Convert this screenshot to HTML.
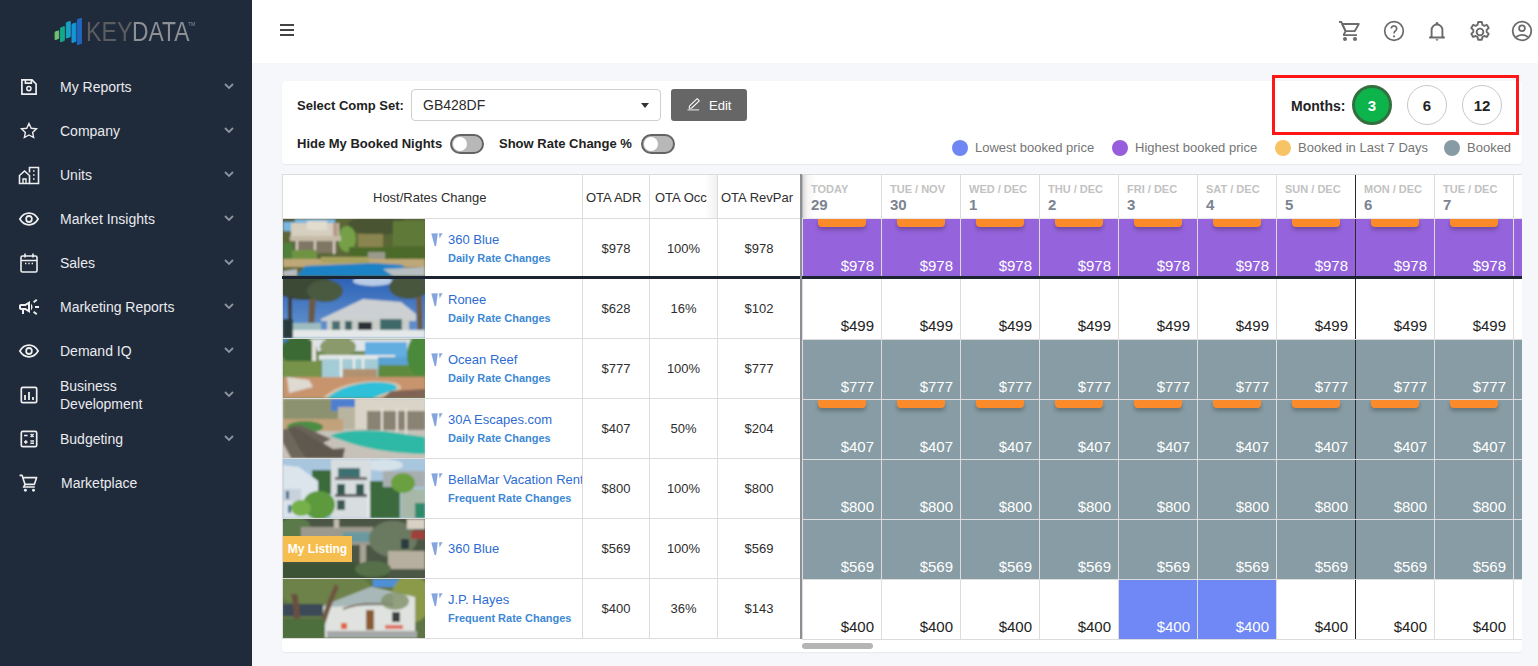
<!DOCTYPE html><html><head><meta charset="utf-8"><style>
*{box-sizing:border-box;margin:0;padding:0}
html,body{width:1538px;height:666px;overflow:hidden;background:#f5f7fa;font-family:"Liberation Sans",sans-serif;position:relative}
.abs{position:absolute}
#side{position:absolute;left:0;top:0;width:252px;height:666px;background:#1f2a3b}
.nav{position:absolute;left:0;width:252px;color:#e9ebee;font-size:14px}
.nav .t{position:absolute;left:60px;white-space:nowrap;line-height:18px}
.nav svg.ic{position:absolute;left:18px}
.nav .chev{position:absolute;left:224px}
#hdr{position:absolute;left:252px;top:0;width:1286px;height:63px;background:#fff}
.card{position:absolute;background:#fff;border-radius:4px;box-shadow:0 1px 2px rgba(0,0,0,0.06)}
.lbl{position:absolute;font-weight:bold;font-size:13px;color:#222;white-space:nowrap;line-height:15px}
.tog{position:absolute;width:34px;height:20px;border:2px solid #636363;border-radius:10px;background:#b8b8b8}
.tog:after{content:"";position:absolute;left:1px;top:1px;width:14px;height:14px;border-radius:50%;background:#fff}
.leg{position:absolute;top:140px;font-size:13px;color:#757575;line-height:16px;white-space:nowrap}
.dot{position:absolute;top:140px;width:16px;height:16px;border-radius:50%}
.mc{position:absolute;top:85px;width:40px;height:40px;border-radius:50%;border:1px solid #c8c8c8;text-align:center;line-height:40px;font-weight:bold;font-size:15px;color:#222}
/* table */
.hl{position:absolute;background:#dcdcdc}
.tx{position:absolute;white-space:nowrap;font-size:13px;color:#2e2e2e;line-height:15px}
.name{position:absolute;left:448px;font-size:13px;color:#2d6cd2;white-space:nowrap;line-height:15px}
.sub{position:absolute;left:448px;font-size:11px;font-weight:bold;color:#3c88d5;white-space:nowrap;line-height:13px}
.vr{position:absolute;left:431px}
.dh1{position:absolute;font-size:11px;font-weight:bold;color:#c2c2c2;white-space:nowrap;line-height:13px}
.dh2{position:absolute;font-size:15px;font-weight:bold;color:#7b8490;white-space:nowrap;line-height:17px}
.cell{position:absolute;width:79px}
.pr{position:absolute;right:7px;font-size:15px;line-height:17px;white-space:nowrap}
.tab{position:absolute;left:15px;top:0;width:48px;height:8px;background:#fb8a2b;border-radius:0 0 4px 4px;box-shadow:0 3px 4px rgba(0,0,0,0.25)}
</style></head><body><div id="side">
<svg class="abs" style="left:50px;top:15px" width="36" height="34" viewBox="0 0 36 34"><path d="M5.1 17.1 L8.7 15.8 L8.7 23.4 L5.1 24.7Z" fill="#6cc173" stroke="#6cc173" stroke-width="1" stroke-linejoin="round"/><path d="M10.6 12.9 L14.3 11.6 L14.3 25.5 L10.6 26.8Z" fill="#13a88b" stroke="#13a88b" stroke-width="1" stroke-linejoin="round"/><path d="M16.3 7.7 L20.2 6.4 L20.2 21.8 L16.3 23.1Z" fill="#17a2c6" stroke="#17a2c6" stroke-width="1" stroke-linejoin="round"/><path d="M22.0 9.3 L25.9 8.0 L25.9 26.3 L22.0 27.6Z" fill="#1595d8" stroke="#1595d8" stroke-width="1" stroke-linejoin="round"/><path d="M27.4 4.6 L31.4 3.3 L31.4 28.4 L27.4 29.7Z" fill="#1f66c1" stroke="#1f66c1" stroke-width="1" stroke-linejoin="round"/></svg>
<div class="abs" style="left:86px;top:17px;font-size:27px;line-height:30px;white-space:nowrap;color:#5b5d61;transform:scaleX(0.86);transform-origin:0 0">KEY</div>
<div class="abs" style="left:132px;top:17px;font-size:27px;line-height:30px;white-space:nowrap;color:#8d9094;transform:scaleX(0.846);transform-origin:0 0">DATA</div>
<div class="abs" style="left:188px;top:21px;font-size:5px;line-height:6px;color:#8d9094">TM</div>
<div class="nav" style="top:78px;height:18px"><div class="t" style="top:0;left:60px">My Reports</div></div>
<svg class="abs" style="left:17px;top:75px" width="24" height="24" viewBox="0 0 24 24"><path d="M4.9 4.9h10.1l4.1 4.1v10.1H4.9z" fill="none" stroke="#eee" stroke-width="1.7"/><path d="M8.4 4.9v3.2h6V4.9" fill="none" stroke="#eee" stroke-width="1.6"/><circle cx="11.9" cy="13.6" r="2.1" fill="none" stroke="#eee" stroke-width="1.5"/></svg>
<svg class="abs" style="left:224px;top:83px" width="10" height="7" viewBox="0 0 10 7"><path d="M1 1l4 4 4-4" fill="none" stroke="#8d949d" stroke-width="1.8"/></svg>
<div class="nav" style="top:122px;height:18px"><div class="t" style="top:0;left:60px">Company</div></div>
<svg class="abs" style="left:17px;top:119px" width="24" height="24" viewBox="0 0 24 24"><path transform="translate(12 12) scale(0.86) translate(-12 -12)" d="M12 3.2l2.6 5.6 6.1.7-4.5 4.1 1.2 6-5.4-3-5.4 3 1.2-6-4.5-4.1 6.1-.7z" fill="none" stroke="#eee" stroke-width="1.6" stroke-linejoin="miter"/></svg>
<svg class="abs" style="left:224px;top:127px" width="10" height="7" viewBox="0 0 10 7"><path d="M1 1l4 4 4-4" fill="none" stroke="#8d949d" stroke-width="1.8"/></svg>
<div class="nav" style="top:166px;height:18px"><div class="t" style="top:0;left:60px">Units</div></div>
<svg class="abs" style="left:17px;top:163px" width="24" height="24" viewBox="0 0 24 24"><path d="M2.5 20.5v-8l5-4.5 5 4.5v8z" fill="none" stroke="#eee" stroke-width="1.6"/><path d="M6 20.5v-4.5h3v4.5" fill="none" stroke="#eee" stroke-width="1.4"/><path d="M12.5 9.5V4.5h9v16h-9" fill="none" stroke="#eee" stroke-width="1.6"/><path d="M16 8h1.6M16 12h1.6M16 16h1.6" stroke="#eee" stroke-width="1.6"/></svg>
<svg class="abs" style="left:224px;top:171px" width="10" height="7" viewBox="0 0 10 7"><path d="M1 1l4 4 4-4" fill="none" stroke="#8d949d" stroke-width="1.8"/></svg>
<div class="nav" style="top:210px;height:18px"><div class="t" style="top:0;left:60px">Market Insights</div></div>
<svg class="abs" style="left:17px;top:207px" width="24" height="24" viewBox="0 0 24 24"><g transform="translate(12 12) scale(0.87 0.92) translate(-12 -12)"><path d="M1.5 12c2.6-4.2 6.2-6.3 10.5-6.3s7.9 2.1 10.5 6.3c-2.6 4.2-6.2 6.3-10.5 6.3S4.1 16.2 1.5 12z" fill="none" stroke="#eee" stroke-width="2"/><circle cx="12" cy="12" r="3.3" fill="none" stroke="#eee" stroke-width="2"/></g></svg>
<svg class="abs" style="left:224px;top:215px" width="10" height="7" viewBox="0 0 10 7"><path d="M1 1l4 4 4-4" fill="none" stroke="#8d949d" stroke-width="1.8"/></svg>
<div class="nav" style="top:254px;height:18px"><div class="t" style="top:0;left:60px">Sales</div></div>
<svg class="abs" style="left:17px;top:251px" width="24" height="24" viewBox="0 0 24 24"><rect x="4" y="5" width="16" height="16" rx="1.5" fill="none" stroke="#eee" stroke-width="1.6"/><path d="M8 2.5v4M16 2.5v4M4 9.5h16" stroke="#eee" stroke-width="1.6"/><path d="M8 12.5h1.4M11.3 12.5h1.4M14.6 12.5h1.4" stroke="#eee" stroke-width="1.6"/></svg>
<svg class="abs" style="left:224px;top:259px" width="10" height="7" viewBox="0 0 10 7"><path d="M1 1l4 4 4-4" fill="none" stroke="#8d949d" stroke-width="1.8"/></svg>
<div class="nav" style="top:298px;height:18px"><div class="t" style="top:0;left:60px">Marketing Reports</div></div>
<svg class="abs" style="left:17px;top:295px" width="24" height="24" viewBox="0 0 24 24"><path fill="#eee" d="M18 11v2h4v-2h-4zm-2 6.61c.96.71 2.21 1.65 3.2 2.39.4-.53.8-1.07 1.2-1.6-.99-.74-2.24-1.68-3.2-2.4-.4.54-.8 1.08-1.2 1.61zM20.4 5.6c-.4-.53-.8-1.070-1.2-1.6-.99.74-2.24 1.68-3.2 2.4.4.53.8 1.07 1.2 1.6.96-.72 2.21-1.65 3.2-2.4zM4 9c-1.1 0-2 .9-2 2v2c0 1.1.9 2 2 2h1v4h2v-4h1l5 3V6L8 9H4zm5.03 1.71L11 9.53v4.94l-1.97-1.18-.48-.29H4v-2h4.55l.48-.29zM15.5 12c0-1.330-.58-2.53-1.5-3.35v6.69c.92-.81 1.5-2.01 1.5-3.34z"/></svg>
<svg class="abs" style="left:224px;top:303px" width="10" height="7" viewBox="0 0 10 7"><path d="M1 1l4 4 4-4" fill="none" stroke="#8d949d" stroke-width="1.8"/></svg>
<div class="nav" style="top:342px;height:18px"><div class="t" style="top:0;left:60px">Demand IQ</div></div>
<svg class="abs" style="left:17px;top:339px" width="24" height="24" viewBox="0 0 24 24"><g transform="translate(12 12) scale(0.87 0.92) translate(-12 -12)"><path d="M1.5 12c2.6-4.2 6.2-6.3 10.5-6.3s7.9 2.1 10.5 6.3c-2.6 4.2-6.2 6.3-10.5 6.3S4.1 16.2 1.5 12z" fill="none" stroke="#eee" stroke-width="2"/><circle cx="12" cy="12" r="3.3" fill="none" stroke="#eee" stroke-width="2"/></g></svg>
<svg class="abs" style="left:224px;top:347px" width="10" height="7" viewBox="0 0 10 7"><path d="M1 1l4 4 4-4" fill="none" stroke="#8d949d" stroke-width="1.8"/></svg>
<div class="nav" style="top:377px;height:36px"><div class="t" style="top:0;left:60px">Business<br>Development</div></div>
<svg class="abs" style="left:17px;top:383px" width="24" height="24" viewBox="0 0 24 24"><rect x="4.3" y="4.3" width="15.4" height="15.4" rx="1.5" fill="none" stroke="#eee" stroke-width="1.7"/><path d="M8 17v-5M12 17v-8M16 17v-3" stroke="#eee" stroke-width="1.8"/></svg>
<svg class="abs" style="left:224px;top:391px" width="10" height="7" viewBox="0 0 10 7"><path d="M1 1l4 4 4-4" fill="none" stroke="#8d949d" stroke-width="1.8"/></svg>
<div class="nav" style="top:430px;height:18px"><div class="t" style="top:0;left:60px">Budgeting</div></div>
<svg class="abs" style="left:17px;top:427px" width="24" height="24" viewBox="0 0 24 24"><rect x="4.3" y="4.3" width="15.4" height="15.4" rx="1.5" fill="none" stroke="#eee" stroke-width="1.7"/><path d="M7 8.5h3.6M7 15h3.6M8.8 13.2v3.6M13.4 14h3.6M13.4 16.3h3.6M13.6 7l3 3M16.6 7l-3 3" stroke="#eee" stroke-width="1.6"/></svg>
<svg class="abs" style="left:224px;top:435px" width="10" height="7" viewBox="0 0 10 7"><path d="M1 1l4 4 4-4" fill="none" stroke="#8d949d" stroke-width="1.8"/></svg>
<div class="nav" style="top:474px;height:18px"><div class="t" style="top:0;left:61px">Marketplace</div></div>
<svg class="abs" style="left:17px;top:471px" width="24" height="24" viewBox="0 0 24 24"><g transform="translate(12 12) scale(0.9) translate(-12 -12)"><path d="M1.5 3.5h2.8l3.2 10h10.5l2.5-7.5H6" fill="none" stroke="#eee" stroke-width="1.8" stroke-linejoin="round"/><path d="M7.5 13.5l-1.3 3h12.3" fill="none" stroke="#eee" stroke-width="1.8"/><circle cx="8" cy="20" r="1.6" fill="#eee"/><circle cx="17" cy="20" r="1.6" fill="#eee"/></g></svg>
</div>
<div id="hdr">
<svg class="abs" style="left:27px;top:22px" width="16" height="16" viewBox="0 0 16 16"><path d="M1 3h14M1 8h14M1 13h14" stroke="#444" stroke-width="2"/></svg>
<svg class="abs" style="left:1086px;top:19px" width="24" height="24" viewBox="0 0 24 24"><path d="M1 3h2.3l1 2M4.2 5h16.6l-4.1 7.2H7.6z" fill="none" stroke="#6b6b6b" stroke-width="1.8" stroke-linejoin="round"/><path d="M4.2 5l3.4 7.2-1.8 3.3c-.2.4 0 .7.4.7H19" fill="none" stroke="#6b6b6b" stroke-width="1.8" stroke-linejoin="round"/><circle cx="7" cy="20.1" r="2" fill="#6b6b6b"/><circle cx="17" cy="20.1" r="2" fill="#6b6b6b"/></svg>
<svg class="abs" style="left:1130px;top:19px" width="24" height="24" viewBox="0 0 24 24"><circle cx="12" cy="12" r="9.3" fill="none" stroke="#6b6b6b" stroke-width="1.7"/><path d="M9.3 9.6a2.7 2.7 0 1 1 4.2 2.2c-1 .7-1.5 1.2-1.5 2.6" fill="none" stroke="#6b6b6b" stroke-width="1.7"/><circle cx="12" cy="17.3" r="1.1" fill="#6b6b6b"/></svg>
<svg class="abs" style="left:1173px;top:19px" width="24" height="24" viewBox="0 0 24 24"><path d="M6.6 17.3V10.9a5.4 5.4 0 0 1 10.8 0V17.3l1.7 1.2H4.9z" fill="none" stroke="#6b6b6b" stroke-width="1.9" stroke-linejoin="round"/><path d="M10.3 20.3h3.4L12 21.9z" fill="#6b6b6b"/><circle cx="12" cy="4.3" r="1.3" fill="#6b6b6b"/></svg>
<svg class="abs" style="left:1216px;top:19px" width="24" height="24" viewBox="0 0 24 24"><g transform="translate(12 13) scale(1.08) translate(-12 -12)"><path d="M10.3 2.8h3.4l.5 2.5 1.8 1 2.4-.9 1.7 2.9-1.9 1.7v2l1.9 1.7-1.7 2.9-2.4-.9-1.8 1-.5 2.5h-3.4l-.5-2.5-1.8-1-2.4.9-1.7-2.9 1.9-1.7v-2L3.9 8.3l1.7-2.9 2.4.9 1.8-1z" fill="none" stroke="#6b6b6b" stroke-width="1.75" stroke-linejoin="round"/><circle cx="12" cy="12" r="3.1" fill="none" stroke="#6b6b6b" stroke-width="1.75"/></g></svg>
<svg class="abs" style="left:1258px;top:19px" width="24" height="24" viewBox="0 0 24 24"><circle cx="12" cy="12" r="9.3" fill="none" stroke="#6b6b6b" stroke-width="1.8"/><circle cx="12" cy="9.3" r="2.9" fill="none" stroke="#6b6b6b" stroke-width="1.8"/><path d="M6 18.2c1.6-1.5 3.7-2.4 6-2.4s4.4.9 6 2.4" fill="none" stroke="#6b6b6b" stroke-width="1.8"/></svg>
</div>
<div class="card" style="left:282px;top:81px;width:1240px;height:83px"></div>
<div class="lbl" style="left:297px;top:98px">Select Comp Set:</div>
<div class="abs" style="left:411px;top:89px;width:250px;height:32px;border:1px solid #cfcfcf;border-radius:4px;background:#fff"></div>
<div class="abs" style="left:423px;top:97px;font-size:14px;line-height:16px;color:#2b2b2b">GB428DF</div>
<svg class="abs" style="left:641px;top:103px" width="8" height="5" viewBox="0 0 8 5"><path d="M0 0h8L4 5z" fill="#333"/></svg>
<div class="abs" style="left:671px;top:89px;width:76px;height:32px;background:#666;border-radius:3px"></div>
<svg class="abs" style="left:686px;top:98px" width="16" height="14" viewBox="0 0 16 14"><path d="M3.2 10.2l.4-2.4 7.6-7.1 2.1 2.1-7.6 7.2z" fill="none" stroke="#fff" stroke-width="1.05" stroke-linejoin="round"/><path d="M1.5 11.9h11.6" stroke="#fff" stroke-width="0.9"/></svg>
<div class="abs" style="left:709px;top:98px;font-size:13px;line-height:15px;color:#fff">Edit</div>
<div class="lbl" style="left:297px;top:136px">Hide My Booked Nights</div>
<div class="tog" style="left:450px;top:134px"></div>
<div class="lbl" style="left:499px;top:136px">Show Rate Change %</div>
<div class="tog" style="left:641px;top:134px"></div>
<div class="abs" style="left:1272px;top:75px;width:247px;height:60px;border:3px solid #ff1616"></div>
<div class="abs" style="left:1291px;top:98px;font-size:14px;font-weight:bold;line-height:16px;color:#222">Months:</div>
<div class="mc" style="left:1352px;background:#0db34b;border:3px solid #34703f;color:#fff;line-height:36px">3</div>
<div class="mc" style="left:1407px">6</div>
<div class="mc" style="left:1462px">12</div>
<div class="dot" style="left:952px;background:#6e87f4"></div>
<div class="leg" style="left:975px">Lowest booked price</div>
<div class="dot" style="left:1112px;background:#965ddd"></div>
<div class="leg" style="left:1135px">Highest booked price</div>
<div class="dot" style="left:1275px;background:#f6c464"></div>
<div class="leg" style="left:1298px">Booked in Last 7 Days</div>
<div class="dot" style="left:1444px;background:#869ba3"></div>
<div class="leg" style="left:1467px">Booked</div>
<div class="card" style="left:282px;top:174px;width:1240px;height:478px;border-radius:0 0 4px 4px"></div>
<div class="abs" style="left:282px;top:174px;width:520px;height:1px;background:#dcdcdc"></div>
<div class="abs" style="left:802px;top:174px;width:720px;height:1px;background:#dcdcdc"></div>
<div class="abs" style="left:282px;top:174px;width:1px;height:465px;background:#dcdcdc"></div>
<div class="tx" style="left:373px;top:190px">Host/Rates Change</div>
<div class="tx" style="left:586px;top:190px">OTA ADR</div>
<div class="tx" style="left:655px;top:190px">OTA Occ</div>
<div class="tx" style="left:721px;top:190px">OTA RevPar</div>
<div class="abs" style="left:705px;top:175px;width:12px;height:43px;background:linear-gradient(to right,rgba(0,0,0,0),rgba(0,0,0,0.06))"></div>
<div class="hl" style="left:282px;top:218px;width:520px;height:1px"></div>
<div class="hl" style="left:282px;top:338px;width:520px;height:1px"></div>
<div class="hl" style="left:282px;top:398px;width:520px;height:1px"></div>
<div class="hl" style="left:282px;top:458px;width:520px;height:1px"></div>
<div class="hl" style="left:282px;top:518px;width:520px;height:1px"></div>
<div class="hl" style="left:282px;top:578px;width:520px;height:1px"></div>
<div class="hl" style="left:282px;top:638px;width:520px;height:1px"></div>
<div class="hl" style="left:582px;top:174px;width:1px;height:465px"></div>
<div class="hl" style="left:649px;top:174px;width:1px;height:465px"></div>
<div class="hl" style="left:717px;top:174px;width:1px;height:465px"></div>
<div class="abs" style="left:800px;top:174px;width:2px;height:465px;background:#8b8f93"></div>
<div class="abs" style="left:282px;top:276px;width:518px;height:3px;background:#1c2431"></div>
<div class="vr" style="top:233px"><svg width="12" height="14" viewBox="0 0 12 14"><path d="M0.3 0.6L6.8 0.2 L5.2 12.6 Q4.6 13.4 3.6 13 Z" fill="#86a5dc"/><path d="M8 0.4L11.6 0.1 L8.6 5.6z" fill="#86a5dc"/></svg></div>
<div class="abs" style="left:448px;top:219px;width:134px;height:40px;overflow:hidden"><div class="name" style="left:0;top:13px">360 Blue</div></div>
<div class="sub" style="top:252px">Daily Rate Changes</div>
<div class="tx" style="left:583px;width:66px;text-align:center;top:241px">$978</div>
<div class="tx" style="left:650px;width:67px;text-align:center;top:241px">100%</div>
<div class="tx" style="left:718px;width:82px;text-align:center;top:241px">$978</div>
<div class="vr" style="top:293px"><svg width="12" height="14" viewBox="0 0 12 14"><path d="M0.3 0.6L6.8 0.2 L5.2 12.6 Q4.6 13.4 3.6 13 Z" fill="#86a5dc"/><path d="M8 0.4L11.6 0.1 L8.6 5.6z" fill="#86a5dc"/></svg></div>
<div class="abs" style="left:448px;top:279px;width:134px;height:40px;overflow:hidden"><div class="name" style="left:0;top:13px">Ronee</div></div>
<div class="sub" style="top:312px">Daily Rate Changes</div>
<div class="tx" style="left:583px;width:66px;text-align:center;top:301px">$628</div>
<div class="tx" style="left:650px;width:67px;text-align:center;top:301px">16%</div>
<div class="tx" style="left:718px;width:82px;text-align:center;top:301px">$102</div>
<div class="vr" style="top:353px"><svg width="12" height="14" viewBox="0 0 12 14"><path d="M0.3 0.6L6.8 0.2 L5.2 12.6 Q4.6 13.4 3.6 13 Z" fill="#86a5dc"/><path d="M8 0.4L11.6 0.1 L8.6 5.6z" fill="#86a5dc"/></svg></div>
<div class="abs" style="left:448px;top:339px;width:134px;height:40px;overflow:hidden"><div class="name" style="left:0;top:13px">Ocean Reef</div></div>
<div class="sub" style="top:372px">Daily Rate Changes</div>
<div class="tx" style="left:583px;width:66px;text-align:center;top:361px">$777</div>
<div class="tx" style="left:650px;width:67px;text-align:center;top:361px">100%</div>
<div class="tx" style="left:718px;width:82px;text-align:center;top:361px">$777</div>
<div class="vr" style="top:413px"><svg width="12" height="14" viewBox="0 0 12 14"><path d="M0.3 0.6L6.8 0.2 L5.2 12.6 Q4.6 13.4 3.6 13 Z" fill="#86a5dc"/><path d="M8 0.4L11.6 0.1 L8.6 5.6z" fill="#86a5dc"/></svg></div>
<div class="abs" style="left:448px;top:399px;width:134px;height:40px;overflow:hidden"><div class="name" style="left:0;top:13px">30A Escapes.com</div></div>
<div class="sub" style="top:432px">Daily Rate Changes</div>
<div class="tx" style="left:583px;width:66px;text-align:center;top:421px">$407</div>
<div class="tx" style="left:650px;width:67px;text-align:center;top:421px">50%</div>
<div class="tx" style="left:718px;width:82px;text-align:center;top:421px">$204</div>
<div class="vr" style="top:473px"><svg width="12" height="14" viewBox="0 0 12 14"><path d="M0.3 0.6L6.8 0.2 L5.2 12.6 Q4.6 13.4 3.6 13 Z" fill="#86a5dc"/><path d="M8 0.4L11.6 0.1 L8.6 5.6z" fill="#86a5dc"/></svg></div>
<div class="abs" style="left:448px;top:459px;width:134px;height:40px;overflow:hidden"><div class="name" style="left:0;top:13px">BellaMar Vacation Rentals</div></div>
<div class="sub" style="top:492px">Frequent Rate Changes</div>
<div class="tx" style="left:583px;width:66px;text-align:center;top:481px">$800</div>
<div class="tx" style="left:650px;width:67px;text-align:center;top:481px">100%</div>
<div class="tx" style="left:718px;width:82px;text-align:center;top:481px">$800</div>
<div class="vr" style="top:542px"><svg width="12" height="14" viewBox="0 0 12 14"><path d="M0.3 0.6L6.8 0.2 L5.2 12.6 Q4.6 13.4 3.6 13 Z" fill="#86a5dc"/><path d="M8 0.4L11.6 0.1 L8.6 5.6z" fill="#86a5dc"/></svg></div>
<div class="name" style="top:541px">360 Blue</div>
<div class="tx" style="left:583px;width:66px;text-align:center;top:541px">$569</div>
<div class="tx" style="left:650px;width:67px;text-align:center;top:541px">100%</div>
<div class="tx" style="left:718px;width:82px;text-align:center;top:541px">$569</div>
<div class="vr" style="top:593px"><svg width="12" height="14" viewBox="0 0 12 14"><path d="M0.3 0.6L6.8 0.2 L5.2 12.6 Q4.6 13.4 3.6 13 Z" fill="#86a5dc"/><path d="M8 0.4L11.6 0.1 L8.6 5.6z" fill="#86a5dc"/></svg></div>
<div class="abs" style="left:448px;top:579px;width:134px;height:40px;overflow:hidden"><div class="name" style="left:0;top:13px">J.P. Hayes</div></div>
<div class="sub" style="top:612px">Frequent Rate Changes</div>
<div class="tx" style="left:583px;width:66px;text-align:center;top:601px">$400</div>
<div class="tx" style="left:650px;width:67px;text-align:center;top:601px">36%</div>
<div class="tx" style="left:718px;width:82px;text-align:center;top:601px">$143</div>
<div class="abs" style="left:283px;top:219px;width:142px;height:57px;overflow:hidden"><svg width="142" height="57" viewBox="0 0 142 57"><defs><filter id="b1" x="-0.1" y="-0.1" width="1.2" height="1.2"><feGaussianBlur stdDeviation="1"/></filter></defs><rect width="142" height="57" fill="#5b6637"/><g filter="url(#b1)">
<rect width="142" height="57" fill="#5b6637"/>
<rect x="0" y="0" width="52" height="12" fill="#79b6df"/>
<rect x="0" y="0" width="12" height="3" fill="#4d5a3a"/>
<rect x="52" y="0" width="90" height="30" fill="#5a6636"/><ellipse cx="95" cy="6" rx="30" ry="10" fill="#4a5530"/>
<rect x="75" y="15" width="25" height="13" fill="#8a8450"/>
<ellipse cx="64" cy="20" rx="9" ry="13" fill="#74a046"/>
<rect x="110" y="2" width="32" height="25" fill="#5e7a38"/>
<rect x="8" y="4" width="48" height="16" fill="#d6cfbf"/>
<rect x="24" y="2" width="20" height="9" fill="#e2dccf"/>
<rect x="50" y="4" width="5" height="16" fill="#b79b8a"/>
<rect x="7" y="17" width="51" height="5" fill="#c6bca8"/>
<rect x="12" y="22" width="42" height="12" fill="#807664"/>
<rect x="13" y="22" width="2" height="13" fill="#d8d2c4"/><rect x="31" y="22" width="2" height="13" fill="#d8d2c4"/><rect x="50" y="22" width="2" height="13" fill="#d8d2c4"/>
<rect x="0" y="24" width="10" height="16" fill="#4f7f3a"/>
<rect x="9" y="31" width="25" height="10" fill="#6f9342"/>
<rect x="66" y="28" width="76" height="14" fill="#4c6a2c"/>
<rect x="85" y="33" width="17" height="9" fill="#9a9a8a"/>
<rect x="0" y="40" width="142" height="8" fill="#bfa877"/>
<rect x="38" y="38" width="48" height="6" fill="#a7a35f"/>
<path d="M14 57 L22 47 L90 44 L120 46 L125 57Z" fill="#1f82c6"/>
<path d="M0 52 L14 50 L14 57 L0 57Z" fill="#b8bcc0"/>
<path d="M100 50 L142 48 L142 57 L110 57Z" fill="#b8bfc2"/>
</g></svg>
</div>
<div class="abs" style="left:283px;top:279px;width:142px;height:59px;overflow:hidden">
<svg width="142" height="59" viewBox="0 0 142 59"><defs><filter id="b2" x="-0.1" y="-0.1" width="1.2" height="1.2"><feGaussianBlur stdDeviation="1"/></filter><linearGradient id="g2" x1="0" y1="0" x2="0" y2="1"><stop offset="0" stop-color="#2f63b8"/><stop offset="1" stop-color="#6a9ad0"/></linearGradient></defs><rect width="142" height="59" fill="url(#g2)"/><g filter="url(#b2)">
<rect width="142" height="59" fill="url(#g2)"/>
<ellipse cx="90" cy="2" rx="20" ry="5" fill="#b8cce6"/>
<ellipse cx="22" cy="8" rx="30" ry="13" fill="#3a4a36"/>
<ellipse cx="42" cy="12" rx="18" ry="11" fill="#4a5a40"/>
<rect x="5" y="18" width="4" height="41" fill="#3e3a30"/>
<path d="M26 20 L33 20 L30 59 L25 59Z" fill="#6a5a44"/>
<ellipse cx="126" cy="8" rx="20" ry="12" fill="#46563c"/>
<path d="M133 18 L139 18 L140 59 L135 59Z" fill="#6a5a44"/>
<rect x="8" y="44" width="30" height="11" fill="#9cbcc0"/>
<path d="M38 40 L80 20 L118 23 L133 35 L133 42 L38 42Z" fill="#ccd0d2"/>
<rect x="44" y="40" width="82" height="19" fill="#c9cdca"/>
<rect x="49" y="42" width="8" height="12" fill="#487070"/><rect x="62" y="42" width="7" height="12" fill="#3c6464"/><rect x="75" y="43" width="14" height="11" fill="#2a3236"/><rect x="97" y="40" width="22" height="14" fill="#406a6a"/>
<rect x="0" y="51" width="142" height="8" fill="#e4e8e8"/>
<rect x="0" y="40" width="10" height="19" fill="#2a3a3a"/>
</g></svg>
</div>
<div class="abs" style="left:283px;top:339px;width:142px;height:59px;overflow:hidden"><svg width="142" height="59" viewBox="0 0 142 59"><defs><filter id="b3" x="-0.1" y="-0.1" width="1.2" height="1.2"><feGaussianBlur stdDeviation="1"/></filter></defs><rect width="142" height="59" fill="#6e8a50"/><g filter="url(#b3)">
<rect width="142" height="59" fill="#6e8a50"/>
<rect x="20" y="0" width="110" height="12" fill="#dfe4ea"/>
<rect x="0" y="0" width="8" height="5" fill="#3e80d0"/>
<ellipse cx="16" cy="12" rx="18" ry="14" fill="#3a6a34"/>
<ellipse cx="55" cy="8" rx="18" ry="10" fill="#8a9a6a"/>
<rect x="29" y="2" width="4" height="22" fill="#e4e2dc"/>
<rect x="82" y="3" width="42" height="16" fill="#62aee0"/>
<rect x="36" y="16" width="76" height="5" fill="#e4e8e8"/>
<rect x="39" y="20" width="56" height="18" fill="#a4ccd6"/>
<rect x="95" y="18" width="30" height="12" fill="#5aa2d2"/>
<rect x="57" y="19" width="2" height="22" fill="#f2f2f0"/><rect x="70" y="20" width="2" height="18" fill="#f2f2f0"/><rect x="79" y="20" width="2" height="17" fill="#f2f2f0"/>
<rect x="60" y="30" width="34" height="8" fill="#b09270"/>
<rect x="0" y="22" width="38" height="18" fill="#76934a"/>
<rect x="96" y="26" width="46" height="16" fill="#5e8a3e"/>
<ellipse cx="136" cy="16" rx="12" ry="20" fill="#4c8a3a"/>
<rect x="0" y="38" width="142" height="21" fill="#c8946e"/>
<path d="M40 59 Q55 44 88 42 Q120 41 118 50 Q106 55 96 59Z" fill="#dcc4a8"/>
<path d="M44 59 Q60 45 90 43 Q116 43 114 50 Q100 55 90 59Z" fill="#2fc0d8"/>
<path d="M100 59 L108 52 L142 50 L142 59Z" fill="#806454"/>
<path d="M4 38 L26 41 L30 48 L6 54Z" fill="#dedad2"/>
</g></svg></div>
<div class="abs" style="left:283px;top:399px;width:142px;height:59px;overflow:hidden">
<svg width="142" height="59" viewBox="0 0 142 59"><defs><filter id="b4" x="-0.1" y="-0.1" width="1.2" height="1.2"><feGaussianBlur stdDeviation="1"/></filter></defs><rect width="142" height="59" fill="#c6c2ba"/><g filter="url(#b4)">
<rect width="142" height="59" fill="#c6c2ba"/>
<rect x="0" y="0" width="55" height="22" fill="#8c9270"/>
<rect x="48" y="0" width="24" height="12" fill="#4d7fd0"/>
<rect x="55" y="8" width="20" height="22" fill="#b8b4a0"/>
<rect x="72" y="0" width="70" height="30" fill="#dad4c8"/>
<rect x="84" y="12" width="58" height="19" fill="#8a8272"/>
<rect x="98" y="9" width="2" height="24" fill="#e6e2d8"/><rect x="113" y="9" width="2" height="24" fill="#e6e2d8"/><rect x="122" y="9" width="2" height="27" fill="#e6e2d8"/>
<rect x="0" y="20" width="60" height="12" fill="#c2a27a"/>
<ellipse cx="22" cy="28" rx="18" ry="6" fill="#4d8c44"/>
<path d="M47 37 Q60 30 100 32 L142 38 L142 55 Q100 54 70 45Z" fill="#2fb9a6"/>
<path d="M0 30 L8 30 L22 59 L8 59 L0 44Z" fill="#6e665a"/>
<path d="M5 29 L12 27 L50 50 L62 49 L60 59 L22 59Z" fill="#5e5850"/>
<path d="M10 27 L17 26 L48 40 L40 44Z" fill="#6a6258"/>
</g></svg>
</div>
<div class="abs" style="left:283px;top:459px;width:142px;height:59px;overflow:hidden">
<svg width="142" height="59" viewBox="0 0 142 59"><defs><filter id="b5" x="-0.1" y="-0.1" width="1.2" height="1.2"><feGaussianBlur stdDeviation="1"/></filter></defs><rect width="142" height="59" fill="#a8c6de"/><g filter="url(#b5)">
<rect width="142" height="59" fill="#a8c6de"/>
<ellipse cx="100" cy="6" rx="20" ry="6" fill="#d6e2ea"/>
<rect x="29" y="11" width="22" height="24" fill="#3b6a3a"/>
<path d="M0 6 L16 8 L35 22 L35 59 L0 59Z" fill="#dce4ec"/>
<rect x="0" y="30" width="18" height="12" fill="#c8d2dc"/>
<rect x="3" y="32" width="3" height="8" fill="#3a6a8a"/><rect x="5" y="46" width="3" height="8" fill="#3a6a8a"/>
<rect x="48" y="0" width="40" height="59" fill="#d8dde0"/>
<rect x="55" y="9" width="22" height="10" fill="#3e7070"/><rect x="54" y="25" width="8" height="10" fill="#305a50"/><rect x="73" y="25" width="8" height="10" fill="#305a50"/><rect x="54" y="41" width="8" height="10" fill="#3a5a50"/>
<rect x="52" y="18" width="32" height="3" fill="#6a6a6a"/><rect x="52" y="35" width="32" height="3" fill="#5a5a5a"/>
<path d="M84 31 L104 42 L107 59 L84 59Z" fill="#e4e8ea"/>
<rect x="87" y="22" width="30" height="37" fill="#3a6a3c"/>
<rect x="100" y="12" width="42" height="16" fill="#a8aeb0"/>
<rect x="118" y="30" width="24" height="29" fill="#a8b8a8"/>
<ellipse cx="120" cy="24" rx="12" ry="10" fill="#6aa040"/>
<ellipse cx="36" cy="46" rx="16" ry="14" fill="#5c9a3c"/>
<ellipse cx="18" cy="49" rx="10" ry="8" fill="#76b04a"/>
<rect x="132" y="44" width="10" height="15" fill="#2e8a6a"/>
</g></svg>
</div>
<div class="abs" style="left:283px;top:519px;width:142px;height:59px;overflow:hidden">
<svg width="142" height="59" viewBox="0 0 142 59"><defs><filter id="b6" x="-0.1" y="-0.1" width="1.2" height="1.2"><feGaussianBlur stdDeviation="1"/></filter></defs><rect width="142" height="59" fill="#4c5644"/><g filter="url(#b6)">
<rect width="142" height="59" fill="#4c5644"/>
<ellipse cx="12" cy="10" rx="16" ry="12" fill="#5a7a48"/>
<rect x="18" y="8" width="72" height="18" fill="#9c9a8e"/>
<rect x="60" y="13" width="30" height="10" fill="#6a9aa0"/>
<rect x="77" y="26" width="6" height="20" fill="#a8a494"/>
<rect x="51" y="0" width="5" height="9" fill="#c0bcb0"/>
<ellipse cx="110" cy="20" rx="24" ry="18" fill="#6a7a60"/>
<rect x="105" y="32" width="37" height="18" fill="#b6ae9e"/>
<rect x="124" y="0" width="18" height="10" fill="#d8d0c4"/>
<rect x="128" y="12" width="14" height="8" fill="#a0403a"/>
<rect x="118" y="20" width="8" height="10" fill="#2a3a40"/>
<rect x="0" y="44" width="105" height="15" fill="#3e5236"/>
<ellipse cx="90" cy="50" rx="18" ry="8" fill="#56704a"/>
</g></svg>
</div>
<div class="abs" style="left:283px;top:579px;width:142px;height:59px;overflow:hidden">
<svg width="142" height="59" viewBox="0 0 142 59"><defs><filter id="b7" x="-0.1" y="-0.1" width="1.2" height="1.2"><feGaussianBlur stdDeviation="1"/></filter></defs><rect width="142" height="59" fill="#5e7444"/><g filter="url(#b7)">
<rect width="142" height="59" fill="#5e7444"/>
<rect x="90" y="0" width="30" height="8" fill="#4e90d8"/>
<rect x="0" y="8" width="10" height="12" fill="#6aa4d8"/>
<ellipse cx="40" cy="10" rx="48" ry="18" fill="#6c8248"/>
<ellipse cx="128" cy="20" rx="20" ry="24" fill="#8a9a4a"/>
<rect x="0" y="25" width="40" height="12" fill="#3a4a58"/>
<path d="M40 27 L88 8 L132 18 L132 59 L42 59Z" fill="#dfe2de"/>
<path d="M40 27 L88 8 L110 14 L110 26 L40 28Z" fill="#a8b8b8"/>
<rect x="83" y="31" width="8" height="20" fill="#8a5a30"/>
<rect x="109" y="33" width="8" height="10" fill="#3a4040"/>
<rect x="58" y="44" width="6" height="6" fill="#e0603a"/><rect x="102" y="46" width="18" height="4" fill="#e07060"/>
<path d="M8 15 Q12 30 11 59 L16 59 Q18 30 14 15Z" fill="#6a5040"/>
<path d="M52 5 Q40 30 34 59 L38 59 Q46 30 56 8Z" fill="#6e5642"/>
<rect x="0" y="40" width="42" height="19" fill="#4e6e3c"/>
<rect x="44" y="52" width="90" height="7" fill="#a4a8a8"/>
<path d="M60 30 Q80 22 110 26" stroke="#6e5a44" stroke-width="1.5" fill="none"/><ellipse cx="112" cy="22" rx="14" ry="9" fill="#7e9068" opacity="0.8"/>
</g></svg>
</div>
<div class="abs" style="left:283px;top:536px;width:69px;height:26px;background:#f6be4f;color:#fff;font-weight:bold;font-size:12px;line-height:26px;text-align:center">My Listing</div>
<div class="abs" style="left:802px;top:175px;width:720px;height:465px;overflow:hidden">
<div class="dh1" style="left:9px;top:8px">TODAY</div>
<div class="dh2" style="left:9px;top:21px">29</div>
<div class="cell" style="left:1px;top:44px;width:78px;height:57px;background:#9564dc">
<div class="tab"></div>
<div class="pr" style="top:38px;color:#fff">$978</div>
</div>
<div class="cell" style="left:1px;top:104px;width:78px;height:60px;background:#fff">
<div class="pr" style="top:38px;color:#222">$499</div>
</div>
<div class="cell" style="left:1px;top:165px;width:78px;height:59px;background:#879ca4">
<div class="pr" style="top:38px;color:#fff">$777</div>
</div>
<div class="cell" style="left:1px;top:225px;width:78px;height:59px;background:#879ca4">
<div class="tab"></div>
<div class="pr" style="top:38px;color:#fff">$407</div>
</div>
<div class="cell" style="left:1px;top:285px;width:78px;height:59px;background:#879ca4">
<div class="pr" style="top:38px;color:#fff">$800</div>
</div>
<div class="cell" style="left:1px;top:345px;width:78px;height:59px;background:#879ca4">
<div class="pr" style="top:38px;color:#fff">$569</div>
</div>
<div class="cell" style="left:1px;top:405px;width:78px;height:59px;background:#fff">
<div class="pr" style="top:38px;color:#222">$400</div>
</div>
<div class="dh1" style="left:88px;top:8px">TUE / NOV</div>
<div class="dh2" style="left:88px;top:21px">30</div>
<div class="cell" style="left:80px;top:44px;width:78px;height:57px;background:#9564dc">
<div class="tab"></div>
<div class="pr" style="top:38px;color:#fff">$978</div>
</div>
<div class="cell" style="left:80px;top:104px;width:78px;height:60px;background:#fff">
<div class="pr" style="top:38px;color:#222">$499</div>
</div>
<div class="cell" style="left:80px;top:165px;width:78px;height:59px;background:#879ca4">
<div class="pr" style="top:38px;color:#fff">$777</div>
</div>
<div class="cell" style="left:80px;top:225px;width:78px;height:59px;background:#879ca4">
<div class="tab"></div>
<div class="pr" style="top:38px;color:#fff">$407</div>
</div>
<div class="cell" style="left:80px;top:285px;width:78px;height:59px;background:#879ca4">
<div class="pr" style="top:38px;color:#fff">$800</div>
</div>
<div class="cell" style="left:80px;top:345px;width:78px;height:59px;background:#879ca4">
<div class="pr" style="top:38px;color:#fff">$569</div>
</div>
<div class="cell" style="left:80px;top:405px;width:78px;height:59px;background:#fff">
<div class="pr" style="top:38px;color:#222">$400</div>
</div>
<div class="dh1" style="left:167px;top:8px">WED / DEC</div>
<div class="dh2" style="left:167px;top:21px">1</div>
<div class="cell" style="left:159px;top:44px;width:78px;height:57px;background:#9564dc">
<div class="tab"></div>
<div class="pr" style="top:38px;color:#fff">$978</div>
</div>
<div class="cell" style="left:159px;top:104px;width:78px;height:60px;background:#fff">
<div class="pr" style="top:38px;color:#222">$499</div>
</div>
<div class="cell" style="left:159px;top:165px;width:78px;height:59px;background:#879ca4">
<div class="pr" style="top:38px;color:#fff">$777</div>
</div>
<div class="cell" style="left:159px;top:225px;width:78px;height:59px;background:#879ca4">
<div class="tab"></div>
<div class="pr" style="top:38px;color:#fff">$407</div>
</div>
<div class="cell" style="left:159px;top:285px;width:78px;height:59px;background:#879ca4">
<div class="pr" style="top:38px;color:#fff">$800</div>
</div>
<div class="cell" style="left:159px;top:345px;width:78px;height:59px;background:#879ca4">
<div class="pr" style="top:38px;color:#fff">$569</div>
</div>
<div class="cell" style="left:159px;top:405px;width:78px;height:59px;background:#fff">
<div class="pr" style="top:38px;color:#222">$400</div>
</div>
<div class="dh1" style="left:246px;top:8px">THU / DEC</div>
<div class="dh2" style="left:246px;top:21px">2</div>
<div class="cell" style="left:238px;top:44px;width:78px;height:57px;background:#9564dc">
<div class="tab"></div>
<div class="pr" style="top:38px;color:#fff">$978</div>
</div>
<div class="cell" style="left:238px;top:104px;width:78px;height:60px;background:#fff">
<div class="pr" style="top:38px;color:#222">$499</div>
</div>
<div class="cell" style="left:238px;top:165px;width:78px;height:59px;background:#879ca4">
<div class="pr" style="top:38px;color:#fff">$777</div>
</div>
<div class="cell" style="left:238px;top:225px;width:78px;height:59px;background:#879ca4">
<div class="tab"></div>
<div class="pr" style="top:38px;color:#fff">$407</div>
</div>
<div class="cell" style="left:238px;top:285px;width:78px;height:59px;background:#879ca4">
<div class="pr" style="top:38px;color:#fff">$800</div>
</div>
<div class="cell" style="left:238px;top:345px;width:78px;height:59px;background:#879ca4">
<div class="pr" style="top:38px;color:#fff">$569</div>
</div>
<div class="cell" style="left:238px;top:405px;width:78px;height:59px;background:#fff">
<div class="pr" style="top:38px;color:#222">$400</div>
</div>
<div class="dh1" style="left:325px;top:8px">FRI / DEC</div>
<div class="dh2" style="left:325px;top:21px">3</div>
<div class="cell" style="left:317px;top:44px;width:78px;height:57px;background:#9564dc">
<div class="tab"></div>
<div class="pr" style="top:38px;color:#fff">$978</div>
</div>
<div class="cell" style="left:317px;top:104px;width:78px;height:60px;background:#fff">
<div class="pr" style="top:38px;color:#222">$499</div>
</div>
<div class="cell" style="left:317px;top:165px;width:78px;height:59px;background:#879ca4">
<div class="pr" style="top:38px;color:#fff">$777</div>
</div>
<div class="cell" style="left:317px;top:225px;width:78px;height:59px;background:#879ca4">
<div class="tab"></div>
<div class="pr" style="top:38px;color:#fff">$407</div>
</div>
<div class="cell" style="left:317px;top:285px;width:78px;height:59px;background:#879ca4">
<div class="pr" style="top:38px;color:#fff">$800</div>
</div>
<div class="cell" style="left:317px;top:345px;width:78px;height:59px;background:#879ca4">
<div class="pr" style="top:38px;color:#fff">$569</div>
</div>
<div class="cell" style="left:317px;top:405px;width:78px;height:59px;background:#7088f6">
<div class="pr" style="top:38px;color:#fff">$400</div>
</div>
<div class="dh1" style="left:404px;top:8px">SAT / DEC</div>
<div class="dh2" style="left:404px;top:21px">4</div>
<div class="cell" style="left:396px;top:44px;width:78px;height:57px;background:#9564dc">
<div class="tab"></div>
<div class="pr" style="top:38px;color:#fff">$978</div>
</div>
<div class="cell" style="left:396px;top:104px;width:78px;height:60px;background:#fff">
<div class="pr" style="top:38px;color:#222">$499</div>
</div>
<div class="cell" style="left:396px;top:165px;width:78px;height:59px;background:#879ca4">
<div class="pr" style="top:38px;color:#fff">$777</div>
</div>
<div class="cell" style="left:396px;top:225px;width:78px;height:59px;background:#879ca4">
<div class="tab"></div>
<div class="pr" style="top:38px;color:#fff">$407</div>
</div>
<div class="cell" style="left:396px;top:285px;width:78px;height:59px;background:#879ca4">
<div class="pr" style="top:38px;color:#fff">$800</div>
</div>
<div class="cell" style="left:396px;top:345px;width:78px;height:59px;background:#879ca4">
<div class="pr" style="top:38px;color:#fff">$569</div>
</div>
<div class="cell" style="left:396px;top:405px;width:78px;height:59px;background:#7088f6">
<div class="pr" style="top:38px;color:#fff">$400</div>
</div>
<div class="dh1" style="left:483px;top:8px">SUN / DEC</div>
<div class="dh2" style="left:483px;top:21px">5</div>
<div class="cell" style="left:475px;top:44px;width:78px;height:57px;background:#9564dc">
<div class="tab"></div>
<div class="pr" style="top:38px;color:#fff">$978</div>
</div>
<div class="cell" style="left:475px;top:104px;width:78px;height:60px;background:#fff">
<div class="pr" style="top:38px;color:#222">$499</div>
</div>
<div class="cell" style="left:475px;top:165px;width:78px;height:59px;background:#879ca4">
<div class="pr" style="top:38px;color:#fff">$777</div>
</div>
<div class="cell" style="left:475px;top:225px;width:78px;height:59px;background:#879ca4">
<div class="tab"></div>
<div class="pr" style="top:38px;color:#fff">$407</div>
</div>
<div class="cell" style="left:475px;top:285px;width:78px;height:59px;background:#879ca4">
<div class="pr" style="top:38px;color:#fff">$800</div>
</div>
<div class="cell" style="left:475px;top:345px;width:78px;height:59px;background:#879ca4">
<div class="pr" style="top:38px;color:#fff">$569</div>
</div>
<div class="cell" style="left:475px;top:405px;width:78px;height:59px;background:#fff">
<div class="pr" style="top:38px;color:#222">$400</div>
</div>
<div class="dh1" style="left:562px;top:8px">MON / DEC</div>
<div class="dh2" style="left:562px;top:21px">6</div>
<div class="cell" style="left:554px;top:44px;width:78px;height:57px;background:#9564dc">
<div class="tab"></div>
<div class="pr" style="top:38px;color:#fff">$978</div>
</div>
<div class="cell" style="left:554px;top:104px;width:78px;height:60px;background:#fff">
<div class="pr" style="top:38px;color:#222">$499</div>
</div>
<div class="cell" style="left:554px;top:165px;width:78px;height:59px;background:#879ca4">
<div class="pr" style="top:38px;color:#fff">$777</div>
</div>
<div class="cell" style="left:554px;top:225px;width:78px;height:59px;background:#879ca4">
<div class="tab"></div>
<div class="pr" style="top:38px;color:#fff">$407</div>
</div>
<div class="cell" style="left:554px;top:285px;width:78px;height:59px;background:#879ca4">
<div class="pr" style="top:38px;color:#fff">$800</div>
</div>
<div class="cell" style="left:554px;top:345px;width:78px;height:59px;background:#879ca4">
<div class="pr" style="top:38px;color:#fff">$569</div>
</div>
<div class="cell" style="left:554px;top:405px;width:78px;height:59px;background:#fff">
<div class="pr" style="top:38px;color:#222">$400</div>
</div>
<div class="dh1" style="left:641px;top:8px">TUE / DEC</div>
<div class="dh2" style="left:641px;top:21px">7</div>
<div class="cell" style="left:633px;top:44px;width:78px;height:57px;background:#9564dc">
<div class="tab"></div>
<div class="pr" style="top:38px;color:#fff">$978</div>
</div>
<div class="cell" style="left:633px;top:104px;width:78px;height:60px;background:#fff">
<div class="pr" style="top:38px;color:#222">$499</div>
</div>
<div class="cell" style="left:633px;top:165px;width:78px;height:59px;background:#879ca4">
<div class="pr" style="top:38px;color:#fff">$777</div>
</div>
<div class="cell" style="left:633px;top:225px;width:78px;height:59px;background:#879ca4">
<div class="tab"></div>
<div class="pr" style="top:38px;color:#fff">$407</div>
</div>
<div class="cell" style="left:633px;top:285px;width:78px;height:59px;background:#879ca4">
<div class="pr" style="top:38px;color:#fff">$800</div>
</div>
<div class="cell" style="left:633px;top:345px;width:78px;height:59px;background:#879ca4">
<div class="pr" style="top:38px;color:#fff">$569</div>
</div>
<div class="cell" style="left:633px;top:405px;width:78px;height:59px;background:#fff">
<div class="pr" style="top:38px;color:#222">$400</div>
</div>
<div class="cell" style="left:712px;top:44px;width:78px;height:57px;background:#9564dc">
<div class="tab"></div>
</div>
<div class="cell" style="left:712px;top:104px;width:78px;height:60px;background:#fff">
</div>
<div class="cell" style="left:712px;top:165px;width:78px;height:59px;background:#879ca4">
</div>
<div class="cell" style="left:712px;top:225px;width:78px;height:59px;background:#879ca4">
<div class="tab"></div>
</div>
<div class="cell" style="left:712px;top:285px;width:78px;height:59px;background:#879ca4">
</div>
<div class="cell" style="left:712px;top:345px;width:78px;height:59px;background:#879ca4">
</div>
<div class="cell" style="left:712px;top:405px;width:78px;height:59px;background:#fff">
</div>
<div class="abs" style="left:0px;top:0;width:1px;height:465px;background:#dcdcdc"></div>
<div class="abs" style="left:79px;top:0;width:1px;height:465px;background:#dcdcdc"></div>
<div class="abs" style="left:158px;top:0;width:1px;height:465px;background:#dcdcdc"></div>
<div class="abs" style="left:237px;top:0;width:1px;height:465px;background:#dcdcdc"></div>
<div class="abs" style="left:316px;top:0;width:1px;height:465px;background:#dcdcdc"></div>
<div class="abs" style="left:395px;top:0;width:1px;height:465px;background:#dcdcdc"></div>
<div class="abs" style="left:474px;top:0;width:1px;height:465px;background:#dcdcdc"></div>
<div class="abs" style="left:553px;top:0;width:1px;height:465px;background:#2a2a2a"></div>
<div class="abs" style="left:632px;top:0;width:1px;height:465px;background:#dcdcdc"></div>
<div class="abs" style="left:711px;top:0;width:1px;height:465px;background:#dcdcdc"></div>
<div class="abs" style="left:0;top:43px;width:720px;height:1px;background:#e6e6e6"></div>
<div class="abs" style="left:0;top:164px;width:720px;height:1px;background:#dcdcdc"></div>
<div class="abs" style="left:0;top:224px;width:720px;height:1px;background:#dcdcdc"></div>
<div class="abs" style="left:0;top:284px;width:720px;height:1px;background:#dcdcdc"></div>
<div class="abs" style="left:0;top:344px;width:720px;height:1px;background:#dcdcdc"></div>
<div class="abs" style="left:0;top:404px;width:720px;height:1px;background:#dcdcdc"></div>
<div class="abs" style="left:0;top:464px;width:720px;height:1px;background:#dcdcdc"></div>
<div class="abs" style="left:0;top:101px;width:720px;height:3px;background:#1c2431"></div>
</div>
<div class="abs" style="left:802px;top:175px;width:14px;height:43px;background:linear-gradient(to right,rgba(0,0,0,0.17),rgba(0,0,0,0.04) 40%,rgba(0,0,0,0))"></div>
<div class="abs" style="left:1522px;top:174px;width:16px;height:492px;background:#f5f7fa"></div>
<div class="abs" style="left:802px;top:643px;width:71px;height:6px;border-radius:3px;background:#b5b5b5"></div></body></html>
